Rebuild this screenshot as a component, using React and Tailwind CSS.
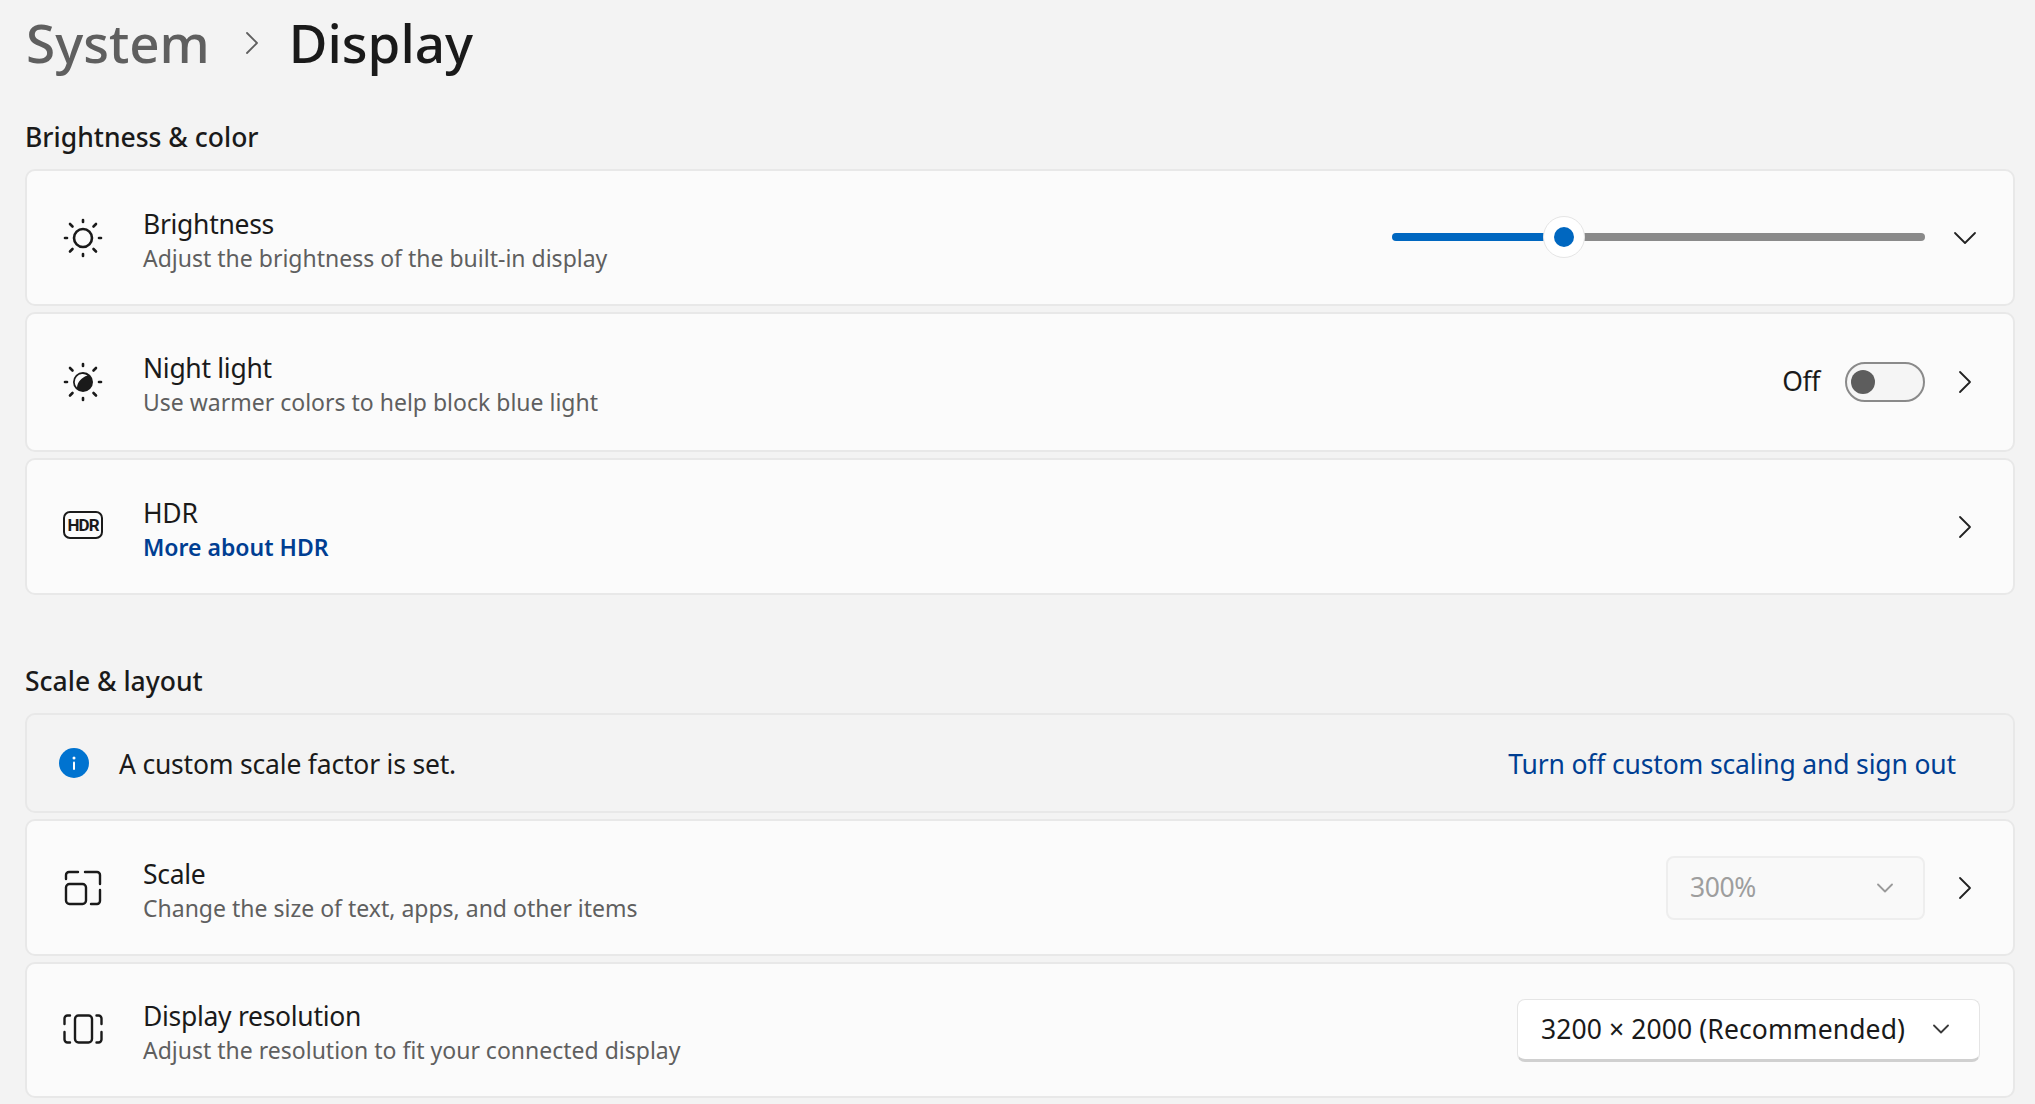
import React from "react";

const Chevron = ({ dir = "right", className = "" }) => {
  const points = {
    right: "2,2 12,12 2,22",
    down: "2,2 12,12 22,2",
  };
  const size = dir === "right" ? "w-[14px] h-[24px]" : "w-[24px] h-[14px]";
  return (
    <svg viewBox={dir === "right" ? "0 0 14 24" : "0 0 24 14"} className={`${size} ${className}`} fill="none">
      <polyline points={points[dir]} stroke="currentColor" strokeWidth="1.8" strokeLinecap="round" strokeLinejoin="round" />
    </svg>
  );
};

const SmallChevron = ({ className = "" }) => (
  <svg viewBox="0 0 16 10" className={`w-[16px] h-[10px] ${className}`} fill="none">
    <polyline points="1,1.5 8,8.5 15,1.5" stroke="currentColor" strokeWidth="1.8" strokeLinecap="round" strokeLinejoin="round" />
  </svg>
);

const Rays = () => (
  <g stroke="#1a1a1a" strokeWidth="2.6" strokeLinecap="round">
    <line x1="20" y1="2" x2="20" y2="4" />
    <line x1="20" y1="36" x2="20" y2="38" />
    <line x1="2" y1="20" x2="4" y2="20" />
    <line x1="36" y1="20" x2="38" y2="20" />
    <line x1="7" y1="6" x2="9.5" y2="8.5" />
    <line x1="33" y1="6" x2="30.5" y2="8.5" />
    <line x1="7" y1="33.5" x2="9.5" y2="31" />
    <line x1="33" y1="33.5" x2="30.5" y2="31" />
  </g>
);

const SunIcon = () => (
  <svg viewBox="0 0 40 40" className="w-[40px] h-[40px]" fill="none">
    <Rays />
    <circle cx="20" cy="20" r="9" stroke="#1a1a1a" strokeWidth="2.6" />
  </svg>
);

const NightIcon = () => (
  <svg viewBox="0 0 40 40" className="w-[40px] h-[40px]" fill="none">
    <Rays />
    <circle cx="20" cy="20" r="10" fill="#1a1a1a" />
    <path d="M24.500 13.500A8 8 0 0 0 14 25.500C14.500 20 18.500 15.500 24.500 13.500z" fill="#fbfbfb" />
  </svg>
);

const HdrIcon = () => (
  <div className="w-[40px] h-[28px] -mt-[3px] border-[2.5px] border-[#1a1a1a] rounded-[7px] flex items-center justify-center text-[17px] leading-none font-bold tracking-[-0.9px] text-[#1a1a1a] font-['Roboto',sans-serif]">
    HDR
  </div>
);

const ScaleIcon = () => (
  <svg viewBox="0 0 40 40" className="w-[40px] h-[40px]" fill="none">
    <g stroke="#1a1a1a" strokeWidth="2.4" strokeLinecap="round" strokeLinejoin="round">
      <rect x="3" y="16" width="20" height="20" rx="3.500" />
      <path d="M3 11V7a3 3 0 0 1 3-3h9" />
      <path d="M22 4h12a3 3 0 0 1 3 3v9" />
      <path d="M37 22v11a3 3 0 0 1-3 3h-6" />
    </g>
  </svg>
);

const ResolutionIcon = () => (
  <svg viewBox="0 0 40 40" className="w-[40px] h-[40px]" fill="none">
    <g stroke="#1a1a1a" strokeWidth="2.4" strokeLinecap="round" strokeLinejoin="round">
      <rect x="12" y="5.500" width="17" height="27" rx="3.500" />
      <path d="M7 5.500H4.500a3 3 0 0 0-3 3V14" />
      <path d="M1.500 22v7.500a3 3 0 0 0 3 3H7" />
      <path d="M33.500 5.500h2a3 3 0 0 1 3 3V14" />
      <path d="M38.500 22v7.500a3 3 0 0 1-3 3h-2" />
    </g>
  </svg>
);

const SettingRow = ({ icon, title, children, subtitle, height, right }) => (
  <div className={`flex items-center pl-[36px] pr-[36px] border-2 border-[#e8e8e8] rounded-[10px] bg-[#fbfbfb] ${height}`}>
    <div className="w-[40px] flex items-center justify-center shrink-0">{icon}</div>
    <div className="ml-[40px] flex-1 pt-[6px]">
      <div className="text-[26.500px] leading-[34px] text-[#1a1a1a] tracking-[-0.3px]">{title}</div>
      {subtitle && <div className="text-[23px] leading-[34px] text-[#5f5f5f]">{subtitle}</div>}
      {children}
    </div>
    {right}
  </div>
);

const ChevronSlot = ({ dir = "right" }) => (
  <div className="w-[24px] ml-[28px] flex justify-center shrink-0 text-[#222222]">
    <Chevron dir={dir} />
  </div>
);

export default function App() {
  return (
    <div className="w-[2035px] h-[1104px] overflow-hidden bg-[#f3f3f3] pl-[25px] pr-[20px] font-['Noto_Sans',sans-serif]">
      <div className="flex items-center h-[86px] pl-[1px]">
        <span className="text-[53px] leading-[86px] text-[#5f5f5f] font-medium">System</span>
        <Chevron className="ml-[35px] mr-[30px] text-[#5f5f5f] w-[14px] h-[20px]" />
        <span className="text-[53px] leading-[86px] text-[#1a1a1a] font-medium">Display</span>
      </div>

      <div className="h-[83px] pt-[29px] text-[26.500px] leading-[44px] font-medium text-[#1a1a1a]">Brightness &amp; color</div>

      <div className="flex flex-col gap-[6px]">
        <SettingRow
          icon={<SunIcon />}
          title="Brightness"
          subtitle="Adjust the brightness of the built-in display"
          height="h-[137px]"
          right={
            <>
              <div className="flex items-center w-[533px] -mt-[1px]">
                <div className="h-[8px] w-[152px] bg-[#0067c0] rounded-l-full"></div>
                <div className="w-[42px] h-[42px] -mx-[1px] z-10 rounded-full bg-white border border-[#e5e5e5] flex items-center justify-center shrink-0">
                  <div className="w-[20px] h-[20px] rounded-full bg-[#0067c0]"></div>
                </div>
                <div className="h-[8px] flex-1 bg-[#8a8a8a] rounded-r-full"></div>
              </div>
              <ChevronSlot dir="down" />
            </>
          }
        />
        <SettingRow
          icon={<NightIcon />}
          title="Night light"
          subtitle="Use warmer colors to help block blue light"
          height="h-[140px]"
          right={
            <>
              <span className="text-[26.500px] text-[#1a1a1a] mr-[25px] tracking-[-0.4px]">Off</span>
              <div className="w-[80px] h-[40px] rounded-full border-[2.5px] border-[#8a8a8a] bg-[#f5f5f5] flex items-center pl-[4px]">
                <div className="w-[24px] h-[24px] rounded-full bg-[#5d5d5d]"></div>
              </div>
              <ChevronSlot />
            </>
          }
        />
        <SettingRow icon={<HdrIcon />} title="HDR" height="h-[137px]" right={<ChevronSlot />}>
          <div className="text-[23px] leading-[34px] text-[#003e92] font-semibold">More about HDR</div>
        </SettingRow>
      </div>

      <div className="h-[118px] pt-[64px] text-[26.500px] leading-[44px] font-medium text-[#1a1a1a]">Scale &amp; layout</div>

      <div className="flex flex-col gap-[6px]">
        <div className="flex items-center h-[100px] pl-[32px] pr-[57px] border-2 border-[#e8e8e8] rounded-[10px] bg-[#f3f3f3]">
          <div className="w-[30px] h-[30px] rounded-full bg-[#0073d0] flex items-center justify-center shrink-0">
            <svg viewBox="0 0 30 30" className="w-[30px] h-[30px]" fill="none">
              <circle cx="15" cy="10" r="1.500" fill="#ffffff" />
              <line x1="15" y1="14.500" x2="15" y2="21" stroke="#ffffff" strokeWidth="2" strokeLinecap="round" />
            </svg>
          </div>
          <div className="ml-[30px] flex-1 pt-[1px] text-[26.500px] leading-[34px] text-[#1a1a1a] tracking-[-0.2px]">A custom scale factor is set.</div>
          <div className="pt-[1px] text-[26.500px] leading-[34px] text-[#003e92] tracking-[-0.15px]">Turn off custom scaling and sign out</div>
        </div>
        <SettingRow
          icon={<ScaleIcon />}
          title="Scale"
          subtitle="Change the size of text, apps, and other items"
          height="h-[137px]"
          right={
            <>
              <div className="w-[259px] h-[64px] pl-[22px] pr-[30px] flex items-center justify-between border-2 border-[#eeeeee] rounded-[8px] bg-[#f9f9f9]">
                <span className="text-[26.500px] text-[#9e9e9e] tracking-[-0.4px]">300%</span>
                <SmallChevron className="text-[#9a9a9a]" />
              </div>
              <ChevronSlot />
            </>
          }
        />
        <SettingRow
          icon={<ResolutionIcon />}
          title="Display resolution"
          subtitle="Adjust the resolution to fit your connected display"
          height="h-[136px]"
          right={
            <div className="w-[463px] h-[63px] pl-[23px] pr-[30px] flex items-center justify-between border border-[#e5e5e5] border-b-[3px] border-b-[#d0d0d0] rounded-[8px] bg-white -mr-[3px]">
              <span className="pt-[2px] text-[26.500px] text-[#1a1a1a] tracking-[0.1px]">3200 × 2000 (Recommended)</span>
              <SmallChevron className="text-[#3a3a3a]" />
            </div>
          }
        />
      </div>
    </div>
  );
}
